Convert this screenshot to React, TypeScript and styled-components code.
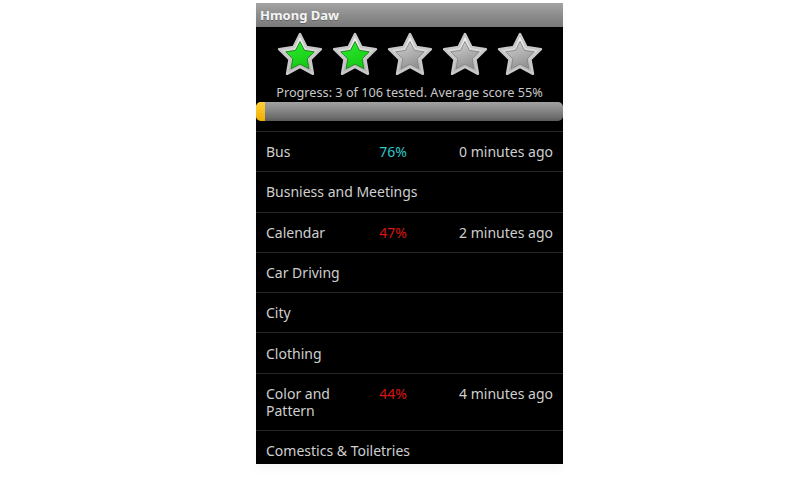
import React from 'react';
import styled, { createGlobalStyle } from 'styled-components';

const GlobalStyle = createGlobalStyle`
  html, body {
    margin: 0;
    padding: 0;
    background: #ffffff;
  }
  body {
    font-family: "Noto Sans", "Open Sans", "DejaVu Sans", sans-serif;
  }
`;

const Page = styled.div`
  width: 800px;
  height: 480px;
  padding: 3px 0 0 256px;
  box-sizing: border-box;
  overflow: hidden;
`;

const Phone = styled.div`
  width: 307px;
  height: 461px;
  background: #000;
  overflow: hidden;
  display: flex;
  flex-direction: column;
  box-shadow: 0 6px 8px rgba(0, 0, 0, 0.03);
`;

const TitleBar = styled.div`
  height: 24px;
  padding: 0 4px;
  display: flex;
  align-items: center;
  background: linear-gradient(#a4a4a4, #8a8a8a 55%, #7a7a7a);
  color: #f4f4f4;
  font-weight: 700;
  font-size: 13px;
  text-shadow: 0 1px 0 rgba(0, 0, 0, 0.25);
  flex-shrink: 0;
`;

const Header = styled.div`
  padding: 3px 0 10px;
  display: flex;
  flex-direction: column;
  align-items: center;
  flex-shrink: 0;
`;

const Stars = styled.div`
  display: flex;
  gap: 7px;
  height: 48px;
`;

const Progress = styled.div`
  margin-top: 6px;
  color: #c8c8c8;
  font-size: 12.7px;
  line-height: 16px;
`;

const Bar = styled.div`
  margin-top: 2px;
  align-self: stretch;
  height: 19px;
  border-radius: 5px;
  overflow: hidden;
  background: linear-gradient(#a2a2a2, #868686 45%, #6e6e6e 80%, #5a5a5a);
  display: flex;
`;

const BarFill = styled.div`
  height: 100%;
  background: linear-gradient(#ffd23a, #f2ad00);
`;

const List = styled.div`
  border-top: 1px solid #262626;
`;

const Row = styled.div`
  display: grid;
  grid-template-columns: 100px 54px 1fr;
  align-items: start;
  padding: 11.2px 10px 11.1px;
  border-bottom: 1px solid #262626;
  font-size: 14px;
  line-height: 17px;
  color: #cfcfcf;
`;

const Name = styled.div<{ $wide: boolean }>`
  grid-column: ${({ $wide }) => ($wide ? '1 / 4' : '1')};
`;

const Score = styled.div<{ $good: boolean }>`
  text-align: center;
  color: ${({ $good }) => ($good ? '#2fc8c8' : '#d81414')};
`;

const When = styled.div`
  text-align: right;
`;

const starPoints = (cx: number, cy: number, R: number, r: number) => {
  const pts: string[] = [];
  for (let i = 0; i < 10; i++) {
    const rad = i % 2 === 0 ? R : r;
    const a = (Math.PI / 5) * i - Math.PI / 2;
    pts.push(`${(cx + rad * Math.cos(a)).toFixed(2)},${(cy + rad * Math.sin(a)).toFixed(2)}`);
  }
  return pts.join(' ');
};

const Star: React.FC<{ on: boolean; id: number }> = ({ on, id }) => (
  <svg width="48" height="48" viewBox="0 0 48 48">
    <defs>
      <linearGradient id={`rim${id}`} x1="0" y1="0" x2="0" y2="1">
        <stop offset="0" stopColor="#fafafa" />
        <stop offset="1" stopColor="#a8a8a8" />
      </linearGradient>
      <linearGradient id={`core${id}`} x1="0" y1="0" x2="0.4" y2="1">
        {on ? (
          <>
            <stop offset="0" stopColor="#30ea30" />
            <stop offset="1" stopColor="#16cc16" />
          </>
        ) : (
          <>
            <stop offset="0" stopColor="#d4d4d4" />
            <stop offset="1" stopColor="#959595" />
          </>
        )}
      </linearGradient>
    </defs>
    <polygon
      points={starPoints(24, 26, 22, 11)}
      fill={`url(#rim${id})`}
      stroke="#c8c8c8"
      strokeWidth="2.5"
      strokeLinejoin="round"
    />
    <polygon
      points={starPoints(24, 26.5, 15, 7.6)}
      fill={`url(#core${id})`}
      stroke={on ? '#0e7a0e' : '#808080'}
      strokeWidth="0.8"
      strokeLinejoin="round"
    />
  </svg>
);

const topics = [
  { name: 'Bus', score: 76, when: '0 minutes ago' },
  { name: 'Busniess and Meetings' },
  { name: 'Calendar', score: 47, when: '2 minutes ago' },
  { name: 'Car Driving' },
  { name: 'City' },
  { name: 'Clothing' },
  { name: 'Color and Pattern', score: 44, when: '4 minutes ago' },
  { name: 'Comestics & Toiletries' },
];

const App: React.FC = () => (
  <>
    <GlobalStyle />
    <Page>
      <Phone>
        <TitleBar>Hmong Daw</TitleBar>
        <Header>
          <Stars>
            {[0, 1, 2, 3, 4].map((i) => (
              <Star key={i} id={i} on={i < 2} />
            ))}
          </Stars>
          <Progress>Progress: 3 of 106 tested. Average score 55%</Progress>
          <Bar>
            <BarFill style={{ width: `${(3 / 106) * 100}%` }} />
          </Bar>
        </Header>
        <List>
          {topics.map((t) => (
            <Row key={t.name}>
              <Name $wide={t.score === undefined}>{t.name}</Name>
              {t.score !== undefined && (
                <>
                  <Score $good={t.score >= 60}>{t.score}%</Score>
                  <When>{t.when}</When>
                </>
              )}
            </Row>
          ))}
        </List>
      </Phone>
    </Page>
  </>
);

export default App;
